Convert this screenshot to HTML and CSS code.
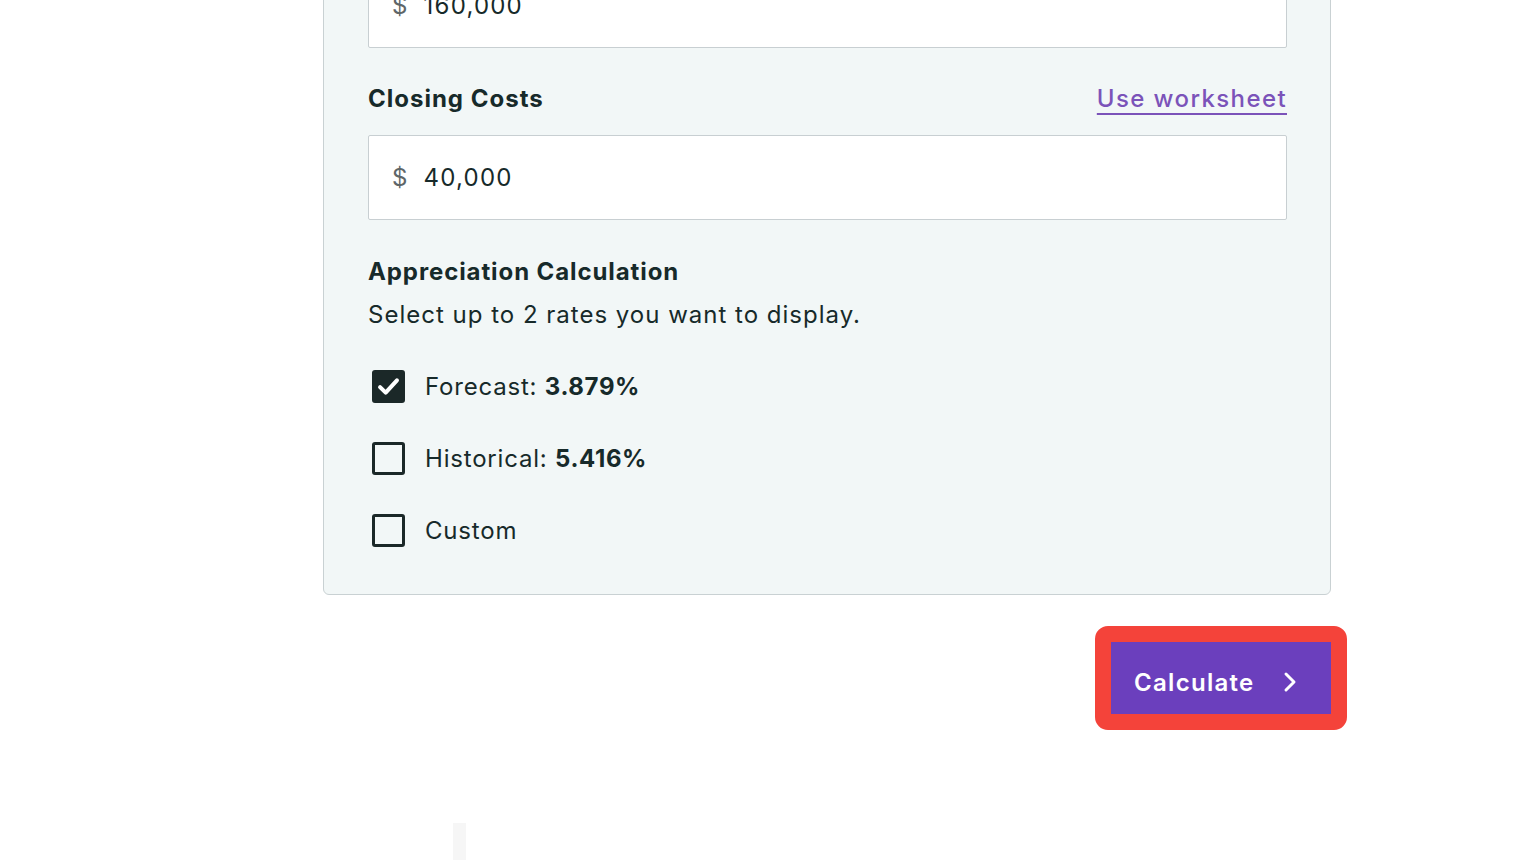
FILE: index.html
```html
<!DOCTYPE html>
<html lang="en">
<head>
<meta charset="utf-8">
<title>Calculator</title>
<link rel="stylesheet" href="styles.css">
</head>
<body>
<main class="page">
  <section class="panel">
    <div class="money-input">
      <span class="currency">$</span>
      <span class="value">160,000</span>
    </div>

    <div class="field-head">
      <span class="field-label">Closing Costs</span>
      <a class="link" href="#">Use worksheet</a>
    </div>
    <div class="money-input">
      <span class="currency">$</span>
      <span class="value">40,000</span>
    </div>

    <h3 class="section-title">Appreciation Calculation</h3>
    <p class="section-hint">Select up to 2 rates you want to display.</p>

    <ul class="options">
      <li class="option">
        <span class="box-wrap"><span class="box checked">
          <svg viewBox="0 0 24 24" width="24" height="24"><path d="M4.5 12.5l5 5L19.5 6.5" fill="none" stroke="#fff" stroke-width="3.6" stroke-linecap="round" stroke-linejoin="round"/></svg>
        </span></span>
        <span class="opt-text">Forecast: <b>3.879%</b></span>
      </li>
      <li class="option">
        <span class="box-wrap"><span class="box"></span></span>
        <span class="opt-text">Historical: <b>5.416%</b></span>
      </li>
      <li class="option">
        <span class="box-wrap"><span class="box"></span></span>
        <span class="opt-text">Custom</span>
      </li>
    </ul>
  </section>

  <div class="actions">
    <button class="calc-btn" type="button">
      <span class="calc-label">Calculate</span>
      <svg class="chev" viewBox="0 0 24 24" width="24" height="24"><path d="M9 4l8 8-8 8" fill="none" stroke="#fff" stroke-width="3" stroke-linecap="round" stroke-linejoin="round"/></svg>
    </button>
  </div>

  <div class="ghost-bar"></div>
</main>
</body>
</html>
```

FILE: styles.css
```css
html, body {
  margin: 0;
  padding: 0;
  background: #ffffff;
  overflow: hidden;
}

body {
  font-family: Inter, "Noto Sans", "Liberation Sans", sans-serif;
  color: #172a2a;
}

.page {
  width: 1008px;
  margin: -82px 0 0 323px;
}

.panel {
  background: #f2f7f7;
  border: 1px solid #c9d1d3;
  border-radius: 6px;
  padding: 44px 43px 44px 44px;
}

.money-input {
  display: flex;
  align-items: center;
  gap: 15px;
  height: 83px;
  padding: 0 23px;
  background: #ffffff;
  border: 1px solid #c8cfd2;
  border-radius: 2px;
  font-size: 24px;
  letter-spacing: 1.2px;
}

.currency {
  color: #5e6668;
}

.value {
  color: #172a2a;
}

.field-head {
  display: flex;
  justify-content: space-between;
  align-items: center;
  height: 32px;
  margin: 35px 0 20px;
  line-height: 32px;
}

.field-label {
  font-size: 24px;
  font-weight: 700;
  letter-spacing: 1px;
}

.link {
  font-size: 24px;
  font-weight: 500;
  color: #7b53b9;
  letter-spacing: 1.4px;
  text-decoration: underline;
  text-decoration-thickness: 2px;
  text-underline-offset: 6px;
}

.section-title {
  margin: 36px 0 11px;
  font-size: 24px;
  line-height: 32px;
  font-weight: 700;
  letter-spacing: 0.9px;
}

.section-hint {
  margin: 0;
  font-size: 24px;
  line-height: 32px;
  letter-spacing: 1px;
}

.options {
  list-style: none;
  margin: 35px 0 0;
  padding: 0;
  display: flex;
  flex-direction: column;
  gap: 32px;
}

.option {
  display: flex;
  align-items: center;
  gap: 17px;
  height: 40px;
  font-size: 24px;
  letter-spacing: 0.8px;
}

.option b {
  font-weight: 700;
  letter-spacing: 0.6px;
}

.box-wrap {
  width: 40px;
  height: 40px;
  display: flex;
  align-items: center;
  justify-content: center;
}

.box {
  box-sizing: border-box;
  width: 33px;
  height: 33px;
  border: 3px solid #1b2828;
  border-radius: 3px;
  display: flex;
  align-items: center;
  justify-content: center;
}

.box.checked {
  background: #1b2828;
}

.box svg {
  width: 27px;
  height: 27px;
}

.actions {
  display: flex;
  justify-content: flex-end;
  margin-top: 31px;
}

.calc-btn {
  box-sizing: content-box;
  display: flex;
  align-items: center;
  width: 220px;
  height: 72px;
  margin: 0 -16px 0 0;
  padding: 0;
  border: 16px solid #f4433a;
  border-radius: 13px;
  background: #6b3fbd;
  color: #ffffff;
  font-family: Inter, "Noto Sans", "Liberation Sans", sans-serif;
  font-size: 24px;
  font-weight: 600;
  letter-spacing: 1.3px;
  cursor: pointer;
}

.calc-label {
  margin: 8px 0 0 23px;
}

.chev {
  margin: 8px 0 0 auto;
  margin-right: 30px;
}

.ghost-bar {
  width: 13px;
  height: 40px;
  margin: 93px 0 0 130px;
  background: #f6f6f6;
}
```
